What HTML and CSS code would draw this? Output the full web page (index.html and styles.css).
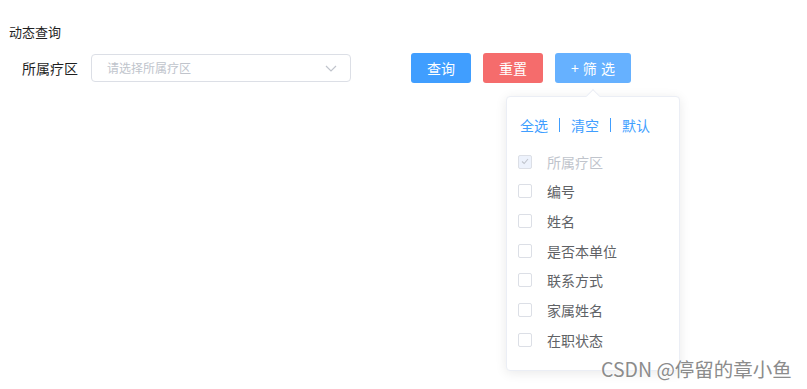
FILE: index.html
```html
<!DOCTYPE html>
<html lang="zh">
<head>
<meta charset="utf-8">
<link rel="stylesheet" href="styles.css">
</head>
<body>
<div class="page">
  <div class="title">动态查询</div>
  <div class="form-row">
    <label class="label">所属疗区</label>
    <div class="select">
      <span class="placeholder">请选择所属疗区</span>
      <svg class="chevron" width="12" height="7" viewBox="0 0 12 7"><path d="M1 1 L6 6 L11 1" fill="none" stroke="#c0c4cc" stroke-width="1.2"/></svg>
    </div>
    <div class="buttons">
      <button class="btn btn-primary">查询</button>
      <button class="btn btn-danger">重置</button>
      <div class="filter-wrap">
        <button class="btn btn-filter">+ 筛 选</button>
        <div class="popover">
          <div class="arrow"></div>
          <div class="links">
            <span class="link">全选</span><span class="sep"></span><span class="link">清空</span><span class="sep"></span><span class="link">默认</span>
          </div>
          <ul class="list">
            <li class="item disabled"><span class="box checked"><svg width="8" height="7" viewBox="0 0 8 7"><path d="M1 3.5 L3.2 5.5 L7 1" fill="none" stroke="#c0c4cc" stroke-width="1.1"/></svg></span><span class="txt">所属疗区</span></li>
            <li class="item"><span class="box"></span><span class="txt">编号</span></li>
            <li class="item"><span class="box"></span><span class="txt">姓名</span></li>
            <li class="item"><span class="box"></span><span class="txt">是否本单位</span></li>
            <li class="item"><span class="box"></span><span class="txt">联系方式</span></li>
            <li class="item"><span class="box"></span><span class="txt">家属姓名</span></li>
            <li class="item"><span class="box"></span><span class="txt">在职状态</span></li>
          </ul>
        </div>
      </div>
    </div>
  </div>
</div>
<div class="watermark">CSDN @停留的章小鱼</div>
</body>
</html>
```
FILE: styles.css
```css
* { box-sizing: border-box; }
html, body { margin: 0; padding: 0; background: #fff; }
body {
  font-family: "Noto Sans CJK SC", "Noto Sans", sans-serif;
  width: 807px;
  height: 389px;
  overflow: hidden;
  position: relative;
}
.page { padding: 22px 0 0 9px; }
.title {
  font-size: 13px;
  line-height: 20px;
  color: #1f1f1f;
}
.form-row {
  display: flex;
  align-items: center;
  margin-top: 11px;
  height: 30px;
}
.label {
  margin-left: 13px;
  width: 56px;
  margin-right: 13px;
  font-size: 14px;
  color: #1f1f1f;
  white-space: nowrap;
}
.select {
  width: 260px;
  height: 28px;
  border: 1px solid #dcdfe6;
  border-radius: 4px;
  display: flex;
  align-items: center;
  justify-content: space-between;
  padding: 0 13px 0 15px;
  margin-top: -1px;
}
.placeholder { font-size: 12px; color: #c0c4cc; }
.chevron { display: block; margin-top: 1px; }
.buttons {
  display: flex;
  align-items: center;
  gap: 12px;
  margin-left: 60px;
}
.btn {
  height: 30px;
  width: 60px;
  border: none;
  border-radius: 3px;
  color: #fff;
  font-family: inherit;
  font-size: 14px;
  padding: 0;
  line-height: 30px;
}
.btn-primary { background: #409eff; }
.btn-danger { background: #f56c6c; }
.btn-filter { background: #66b1ff; width: 76px; word-spacing: 1px; }
.filter-wrap { position: relative; }
.popover {
  position: absolute;
  top: 43px;
  left: 50%;
  transform: translateX(-50%);
  width: 174px;
  height: 275px;
  background: #fff;
  border: 1px solid #ebeef5;
  border-radius: 4px;
  box-shadow: 0 2px 12px rgba(0,0,0,0.09);
  padding: 17px 11px 0 11px;
}
.arrow {
  position: absolute;
  top: -6px;
  left: 50%;
  width: 10px;
  height: 10px;
  margin-left: -5px;
  background: #fff;
  border-left: 1px solid #ebeef5;
  border-top: 1px solid #ebeef5;
  transform: rotate(45deg);
}
.links {
  display: flex;
  align-items: center;
  height: 22px;
  padding-left: 2px;
  font-size: 14px;
  color: #409eff;
}
.sep {
  display: inline-block;
  width: 1px;
  height: 14px;
  background: #409eff;
  margin: 0 11px;
}
.list { list-style: none; margin: 11px 0 0; padding: 0; }
.item {
  height: 29.67px;
  display: flex;
  align-items: center;
  font-size: 14px;
  color: #606266;
}
.box {
  width: 14px;
  height: 14px;
  border: 1px solid #dcdfe6;
  border-radius: 2px;
  background: #fff;
  display: flex;
  align-items: center;
  justify-content: center;
  flex: none;
}
.box.checked { background: #edf2fc; }
.txt { margin-left: 15px; }
.item.disabled { color: #c0c4cc; }
.watermark {
  position: absolute;
  left: 601px;
  top: 356px;
  font-family: "Noto Sans CJK SC", sans-serif;
  font-size: 19.5px;
  line-height: 26px;
  color: #8c8c8c;
  text-shadow: 0 0 2px #fff, 0 0 2px #fff;
  white-space: nowrap;
}
```
